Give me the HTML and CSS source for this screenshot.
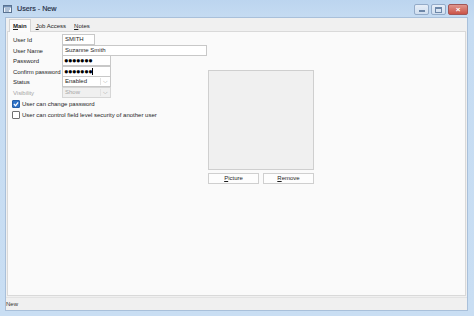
FILE: index.html
```html
<!DOCTYPE html>
<html>
<head>
  <title>Users - New</title>
  <link rel="stylesheet" href="styles.css">
</head>
<body>
  <div class="window">
    <div class="titlebar">
      <svg class="app-icon" width="9" height="8" viewBox="0 0 9 8">
        <rect x="0.5" y="0.5" width="8" height="7" fill="#eef3f9" stroke="#5a7392"/>
        <rect x="1" y="1" width="7" height="1.5" fill="#6f8db3"/>
        <line x1="2" y1="4" x2="7" y2="4" stroke="#6f8db3"/>
        <line x1="2" y1="6" x2="6" y2="6" stroke="#6f8db3"/>
      </svg>
      <span class="title">Users - New</span>
      <div class="caption-buttons">
        <div class="cbtn"><span class="min-glyph"></span></div>
        <div class="cbtn"><span class="max-glyph"></span></div>
        <div class="cbtn close"><span class="x-glyph">×</span></div>
      </div>
    </div>

    <div class="client">
      <div class="tabs">
        <div class="tab active"><u>M</u>ain</div>
        <div class="tab"><u>J</u>ob Access</div>
        <div class="tab"><u>N</u>otes</div>
      </div>

      <div class="page">
        <div class="form">
          <div class="fields">
            <label>User Id</label>
            <div class="input w-id">SMITH</div>
            <label>User Name</label>
            <div class="input w-name">Suzanne Smith</div>
            <label>Password</label>
            <div class="input w-small dots">●●●●●●●</div>
            <label>Confirm password</label>
            <div class="input w-small dots">●●●●●●●<span class="caret"></span></div>
            <label>Status</label>
            <div class="input w-small select">Enabled<span class="arrow">⌵</span></div>
            <label class="disabled">Visibility</label>
            <div class="input w-small select disabled">Show<span class="arrow">⌵</span></div>
          </div>

          <div class="check-row">
            <span class="checkbox checked">
              <svg width="6" height="6" viewBox="0 0 7 7"><path d="M1 3.5 L3 5.5 L6 1.5" fill="none" stroke="#fff" stroke-width="1.4"/></svg>
            </span>
            User can change password
          </div>
          <div class="check-row">
            <span class="checkbox"></span>
            User can control field level security of another user
          </div>
        </div>

        <div class="photo">
          <div class="picture-box"></div>
          <div class="photo-buttons">
            <button><u>P</u>icture</button>
            <button><u>R</u>emove</button>
          </div>
        </div>
      </div>

      <div class="statusbar">New</div>
    </div>
  </div>
</body>
</html>
```

FILE: styles.css
```css
body {
  margin: 0;
  width: 474px;
  height: 316px;
  overflow: hidden;
  background: #c4daf1;
  font-family: 'Liberation Sans', Arial, sans-serif;
  font-size: 6px;
  color: #1e1e1e;
}

.window {
  display: flex;
  flex-direction: column;
  height: 316px;
  padding: 0 6px 5px 5px;
  box-sizing: border-box;
  background: linear-gradient(#bcd5ef, #c6dcf2 20px, #c9def3);
}

.titlebar {
  height: 17px;
  display: flex;
  align-items: center;
  margin-left: -2px;
}

.app-icon {
  margin-right: 5px;
}

.title {
  font-size: 7.2px;
  color: #1c2b3e;
  -webkit-text-stroke: 0.15px #1c2b3e;
}

.caption-buttons {
  margin-left: auto;
  display: flex;
  gap: 2px;
  align-self: flex-start;
  margin-top: 4px;
}

.cbtn {
  width: 13px;
  height: 9px;
  border: 1px solid #94abc8;
  border-radius: 2px;
  background: linear-gradient(#e6eef8, #d0deef);
  display: flex;
  align-items: center;
  justify-content: center;
}

.cbtn.close {
  width: 18px;
  border-color: #a25656;
  background: linear-gradient(#df968d, #cb5347);
}

.min-glyph {
  width: 6px;
  height: 2px;
  background: #6d87a8;
  margin-top: 3px;
}

.max-glyph {
  width: 5px;
  height: 3px;
  border: 1px solid #6d87a8;
  border-top-width: 2px;
}

.x-glyph {
  color: #fff;
  font-size: 8px;
  font-weight: bold;
  line-height: 8px;
}

.client {
  flex: 1;
  display: flex;
  flex-direction: column;
  background: #f0f0f0;
  border: 1px solid #a9c0da;
}

.tabs {
  display: flex;
  padding: 3px 0 0 3px;
  height: 10px;
  align-items: flex-end;
}

.tab {
  padding: 1px 3px 1px 5px;
  line-height: 8px;
  color: #1e1e1e;
}

.tab u,
button u {
  text-decoration-thickness: 1px;
  text-underline-offset: 1px;
}

.tab.active {
  background: #fbfbfb;
  border: 1px solid #d4d4d4;
  border-bottom: none;
  padding: 2px 3px;
  margin-bottom: -1px;
  position: relative;
  font-weight: bold;
}

.page {
  flex: 1;
  display: flex;
  background: #fafafa;
  border: 1px solid #d9d9d9;
  margin: 0 1px;
  padding: 3px 0 0 5px;
}

.form {
  width: 195px;
}

.fields {
  display: grid;
  grid-template-columns: 49px auto;
  grid-auto-rows: 10.5px;
  align-items: center;
  justify-items: start;
}

label {
  line-height: 8px;
  white-space: nowrap;
  letter-spacing: -0.05px;
}

.input {
  box-sizing: border-box;
  height: 11px;
  line-height: 9px;
  border: 1px solid #c8c8c8;
  background: #fff;
  padding: 0 2px;
  margin-top: -1px;
  white-space: nowrap;
}

.w-id { width: 33px; }
.w-name { width: 145px; }
.w-small { width: 49px; }

.dots {
  font-size: 7.5px;
  letter-spacing: -0.5px;
  color: #000;
  display: flex;
  align-items: center;
  padding-left: 1px;
}

.caret {
  width: 1px;
  height: 7px;
  background: #000;
}

.select {
  display: flex;
  align-items: center;
  justify-content: space-between;
}

.arrow {
  color: #8a8a8a;
  font-size: 6px;
  line-height: 6px;
  border-left: 1px solid #e2e2e2;
  padding-left: 2px;
  height: 7px;
}

.disabled {
  color: #a6a6a6;
}

.input.disabled {
  background: #f0f0f0;
  border-color: #d6d6d6;
}

.check-row {
  display: flex;
  align-items: center;
  gap: 2px;
  height: 11px;
  margin-left: -1px;
  white-space: nowrap;
}

.check-row:first-of-type {
  margin-top: 3px;
}

.checkbox {
  width: 6px;
  height: 6px;
  border: 1px solid #707070;
  background: #fff;
  display: flex;
  align-items: center;
  justify-content: center;
  border-radius: 1px;
}

.checkbox.checked {
  background: #2f73c9;
  border-color: #255fa8;
}

.photo {
  margin-top: 35px;
  display: flex;
  flex-direction: column;
}

.picture-box {
  width: 104px;
  height: 98px;
  border: 1px solid #cfcfcf;
  background: #f0f0f0;
}

.photo-buttons {
  display: flex;
  gap: 4px;
  margin-top: 3px;
}

button {
  width: 51px;
  height: 11px;
  padding: 0;
  border: 1px solid #cfcfcf;
  background: #fdfdfd;
  font-family: 'Liberation Sans', Arial, sans-serif;
  font-size: 6px;
  line-height: 9px;
  color: #1e1e1e;
}

.statusbar {
  height: 12px;
  line-height: 12px;
  margin-top: 1px;
  border-top: 1px solid #e3e3e3;
  font-size: 6px;
  color: #333;
}
```
